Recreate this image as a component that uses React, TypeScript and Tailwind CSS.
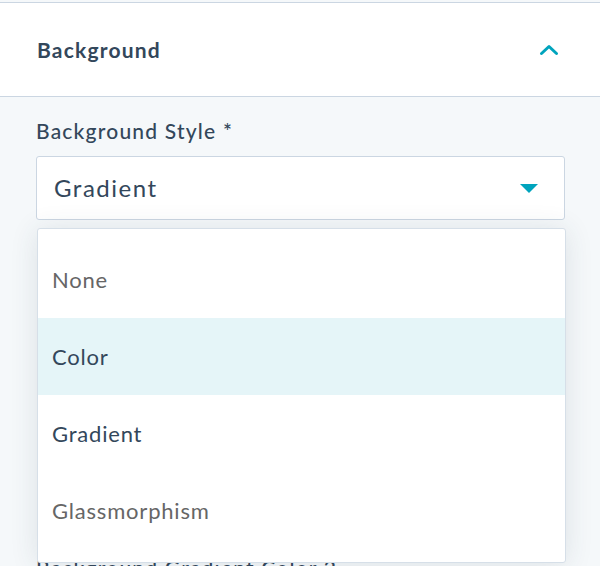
import { useState } from 'react';

const options = [
  { label: 'None', muted: true },
  { label: 'Color', muted: false },
  { label: 'Gradient', muted: false },
  { label: 'Glassmorphism', muted: true },
];

function ChevronUp() {
  return (
    <svg width="20" height="12" viewBox="0 0 20 12" fill="none">
      <path d="M2.5 9.5 L10 2.5 L17.5 9.5" stroke="#00a4bd" strokeWidth="3" strokeLinecap="round" strokeLinejoin="round" />
    </svg>
  );
}

function CaretDown() {
  return (
    <svg width="18" height="9" viewBox="0 0 18 9">
      <path d="M0 0 H18 L9 9 Z" fill="#00a4bd" />
    </svg>
  );
}

export default function App() {
  const [hovered] = useState('Color');

  return (
    <div
      className="relative w-[600px] h-[566px] overflow-hidden bg-[#f5f8fa] text-[#33475b]"
      style={{ fontFamily: 'Lato, "Noto Sans", sans-serif' }}
    >
      {/* Section header */}
      <div className="mt-[2px] h-[95px] bg-white border-y border-[#cbd6e2] flex items-center justify-between pl-[37px] pr-[41px]">
        <span className="text-[21px] font-bold tracking-[1.2px]">Background</span>
        <ChevronUp />
      </div>

      {/* Field */}
      <div className="pl-[36px] pr-[35px] pt-[20px]">
        <div className="text-[21px] font-medium leading-[28px] tracking-[1.2px]">Background Style *</div>
        <div className="mt-[11px] h-[64px] bg-white border border-[#cbd6e2] rounded-[3px] flex items-center justify-between pl-[17px] pr-[26px]">
          <span className="text-[24px] tracking-[1.5px]">Gradient</span>
          <CaretDown />
        </div>
        <div className="mt-[334px] text-[21px] font-medium leading-[28px] tracking-[1.2px]">Background Gradient Color 2</div>
      </div>

      {/* Open menu */}
      <div className="absolute left-[37px] top-[228px] w-[529px] h-[335px] bg-white border border-[#d6dfe8] rounded-[3px] shadow-[0_2px_28px_rgba(45,62,80,0.12)] py-[12px]">
        {options.map((o) => (
          <div
            key={o.label}
            className={`h-[77px] flex items-center pl-[14px] text-[22px] tracking-[0.8px] ${
              o.label === hovered ? 'bg-[#e5f5f8]' : ''
            } ${o.muted ? 'text-[#666666]' : 'text-[#33475b]'}`}
          >
            {o.label}
          </div>
        ))}
      </div>
    </div>
  );
}
